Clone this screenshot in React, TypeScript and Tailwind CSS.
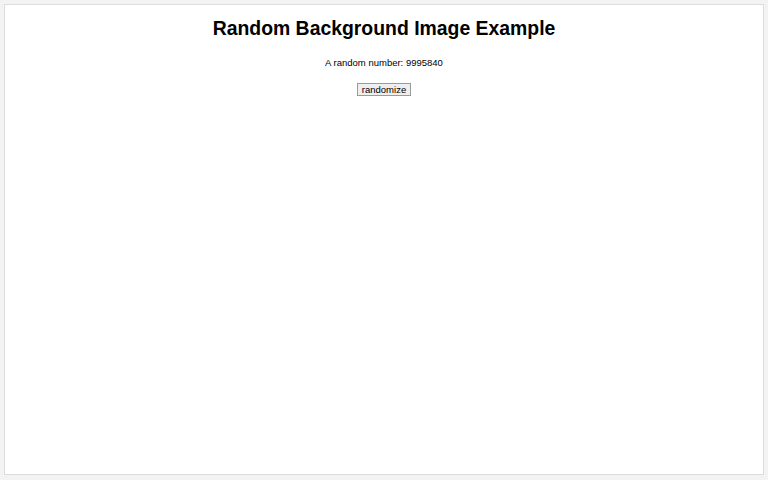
import { useState } from "react";

// Demo page: a title, a random number and a button that rolls a new one.
export default function App() {
  const [value, setValue] = useState(9995840);

  return (
    <div
      className="h-[480px] w-[768px] bg-[#f3f3f3] p-[4px]"
      style={{ fontFamily: '"Liberation Sans", Arial, sans-serif' }}
    >
      <div className="flex h-[471px] w-[760px] flex-col items-center border border-[#dcdcdc] bg-white text-black">
        <h1 className="mt-[9px] text-[19.4px] font-bold leading-[28px]">
          Random Background Image Example
        </h1>
        <p className="mt-[15px] text-[9.5px] leading-[12px]">
          A random number: {value}
        </p>
        <button
          className="mt-[14px] h-[13px] border border-[#9a9a9a] bg-[#efefef] px-[4px] text-[9.5px] leading-[11px]"
          onClick={() => setValue(Math.floor(Math.random() * 10000000))}
        >
          randomize
        </button>
      </div>
    </div>
  );
}
